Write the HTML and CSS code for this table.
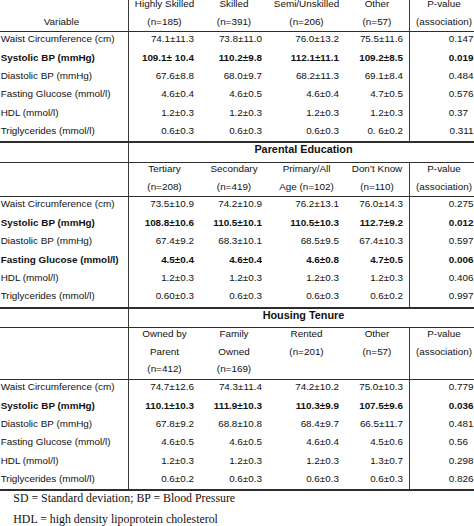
FILE: index.html
```html
<!DOCTYPE html>
<html>
<head>
<meta charset="utf-8">
<link rel="stylesheet" href="styles.css">
</head>
<body>
<div class="sheet">
<table class="tbl">
<colgroup><col class="c1"><col class="c2"><col class="c3"><col class="c4"><col class="c5"><col class="c6"></colgroup>
<tbody>
<tr class="hd">
<th class="var"><div class="ln">&nbsp;</div><div class="ln">Variable</div></th>
<th><div class="ln">Highly Skilled</div><div class="ln">(n=185)</div></th>
<th><div class="ln">Skilled</div><div class="ln">(n=391)</div></th>
<th><div class="ln">Semi/Unskilled</div><div class="ln">(n=206)</div></th>
<th class="sep"><div class="ln">Other</div><div class="ln">(n=57)</div></th>
<th class="pv"><div class="ln">P-value</div><div class="ln">(association)</div></th>
</tr>
<tr><td class="var">Waist Circumference (cm)</td><td>74.1±11.3</td><td>73.8±11.0</td><td>76.0±13.2</td><td class="sep">75.5±11.6</td><td class="pv">0.147</td></tr>
<tr class="b"><td class="var">Systolic BP (mmHg)</td><td>109.1± 10.4</td><td>110.2±9.8</td><td>112.1±11.1</td><td class="sep">109.2±8.5</td><td class="pv">0.019</td></tr>
<tr><td class="var">Diastolic BP (mmHg)</td><td>67.6±8.8</td><td>68.0±9.7</td><td>68.2±11.3</td><td class="sep">69.1±8.4</td><td class="pv">0.484</td></tr>
<tr><td class="var">Fasting Glucose (mmol/l)</td><td>4.6±0.4</td><td>4.6±0.5</td><td>4.6±0.4</td><td class="sep">4.7±0.5</td><td class="pv">0.576</td></tr>
<tr><td class="var">HDL (mmol/l)</td><td>1.2±0.3</td><td>1.2±0.3</td><td>1.2±0.3</td><td class="sep">1.2±0.3</td><td class="pv"><span class="short">0.37</span></td></tr>
<tr class="last"><td class="var">Triglycerides (mmol/l)</td><td>0.6±0.3</td><td>0.6±0.3</td><td>0.6±0.3</td><td class="sep">0. 6±0.2</td><td class="pv">0.311</td></tr>

<tr class="sec"><td class="var"></td><td colspan="5" class="title">Parental Education</td></tr>
<tr class="hd">
<th class="var"><div class="ln">&nbsp;</div><div class="ln">&nbsp;</div></th>
<th><div class="ln">Tertiary</div><div class="ln">(n=208)</div></th>
<th><div class="ln">Secondary</div><div class="ln">(n=419)</div></th>
<th><div class="ln">Primary/All</div><div class="ln">Age (n=102)</div></th>
<th class="sep"><div class="ln">Don’t Know</div><div class="ln">(n=110)</div></th>
<th class="pv"><div class="ln">P-value</div><div class="ln">(association)</div></th>
</tr>
<tr><td class="var">Waist Circumference (cm)</td><td>73.5±10.9</td><td>74.2±10.9</td><td>76.2±13.1</td><td class="sep">76.0±14.3</td><td class="pv">0.275</td></tr>
<tr class="b"><td class="var">Systolic BP (mmHg)</td><td>108.8±10.6</td><td>110.5±10.1</td><td>110.5±10.3</td><td class="sep">112.7±9.2</td><td class="pv">0.012</td></tr>
<tr><td class="var">Diastolic BP (mmHg)</td><td>67.4±9.2</td><td>68.3±10.1</td><td>68.5±9.5</td><td class="sep">67.4±10.3</td><td class="pv">0.597</td></tr>
<tr class="b"><td class="var">Fasting Glucose (mmol/l)</td><td>4.5±0.4</td><td>4.6±0.4</td><td>4.6±0.8</td><td class="sep">4.7±0.5</td><td class="pv">0.006</td></tr>
<tr><td class="var">HDL (mmol/l)</td><td>1.2±0.3</td><td>1.2±0.3</td><td>1.2±0.3</td><td class="sep">1.2±0.3</td><td class="pv">0.406</td></tr>
<tr class="last"><td class="var">Triglycerides (mmol/l)</td><td>0.60±0.3</td><td>0.6±0.3</td><td>0.6±0.3</td><td class="sep">0.6±0.2</td><td class="pv">0.997</td></tr>

<tr class="sec"><td class="var"></td><td colspan="5" class="title">Housing Tenure</td></tr>
<tr class="hd">
<th class="var"><div class="ln">&nbsp;</div><div class="ln">&nbsp;</div><div class="ln">&nbsp;</div></th>
<th><div class="ln">Owned by</div><div class="ln">Parent</div><div class="ln">(n=412)</div></th>
<th><div class="ln">Family</div><div class="ln">Owned</div><div class="ln">(n=169)</div></th>
<th><div class="ln">Rented</div><div class="ln">(n=201)</div></th>
<th class="sep"><div class="ln">Other</div><div class="ln">(n=57)</div></th>
<th class="pv"><div class="ln">P-value</div><div class="ln">(association)</div></th>
</tr>
<tr><td class="var">Waist Circumference (cm)</td><td>74.7±12.6</td><td>74.3±11.4</td><td>74.2±10.2</td><td class="sep">75.0±10.3</td><td class="pv">0.779</td></tr>
<tr class="b"><td class="var">Systolic BP (mmHg)</td><td>110.1±10.3</td><td>111.9±10.3</td><td>110.3±9.9</td><td class="sep">107.5±9.6</td><td class="pv">0.036</td></tr>
<tr><td class="var">Diastolic BP (mmHg)</td><td>67.8±9.2</td><td>68.8±10.8</td><td>68.4±9.7</td><td class="sep">66.5±11.7</td><td class="pv">0.481</td></tr>
<tr><td class="var">Fasting Glucose (mmol/l)</td><td>4.6±0.5</td><td>4.6±0.5</td><td>4.6±0.4</td><td class="sep">4.5±0.6</td><td class="pv"><span class="short">0.56</span></td></tr>
<tr><td class="var">HDL (mmol/l)</td><td>1.2±0.3</td><td>1.2±0.3</td><td>1.2±0.3</td><td class="sep">1.3±0.7</td><td class="pv">0.298</td></tr>
<tr class="last"><td class="var">Triglycerides (mmol/l)</td><td>0.6±0.2</td><td>0.6±0.3</td><td>0.6±0.3</td><td class="sep">0.6±0.3</td><td class="pv">0.826</td></tr>
</tbody>
</table>
</div>
<div class="notes">
<p class="note">SD = Standard deviation; BP = Blood Pressure</p>
<p class="note second">HDL = high density lipoprotein cholesterol</p>
</div>
</body>
</html>
```
FILE: styles.css
```css
html, body {
  margin: 0;
  padding: 0;
  background: #ffffff;
}
body {
  width: 474px;
  height: 526px;
  overflow: hidden;
  color: #111111;
}
.sheet {
  margin-left: -5px;
  margin-top: -2.2px;
  width: 483px;
}
.tbl {
  width: 483px;
  table-layout: fixed;
  border-collapse: separate;
  border-spacing: 0;
  font-family: "Liberation Sans", Arial, sans-serif;
  font-size: 9.9px;
  color: #111111;
}
.c1 { width: 134px; }
.c2 { width: 71px; }
.c3 { width: 68px; }
.c4 { width: 77px; }
.c5 { width: 65px; }
.c6 { width: 68px; }

.tbl th, .tbl td {
  box-sizing: border-box;
  white-space: nowrap;
  overflow: visible;
}
.tbl th {
  font-weight: normal;
  text-align: center;
  vertical-align: top;
  padding: 0 0 3.8px 0;
  border-bottom: 1px solid #2e2e2e;
}
.tbl th .ln {
  line-height: 12px;
}
.tbl th .ln + .ln {
  margin-top: 5.7px;
}
.tbl td {
  text-align: right;
  vertical-align: top;
  line-height: 14.5px;
  padding: 0 6px 3.9px 0;
}
.tbl .var {
  text-align: left;
  padding-left: 5.7px;
  border-right: 1px solid #3a3a3a;
}
.tbl th.var {
  text-align: center;
  padding-left: 0;
}
.tbl .sep {
  border-right: 1px solid #3a3a3a;
}
.tbl td.pv {
  padding-right: 4.5px;
}
.short {
  padding-right: 5.5px;
}
.tbl tr.b td {
  font-weight: bold;
}
.tbl tr.last td {
  padding-bottom: 2.7px;
  border-bottom: 2px solid #2e2e2e;
}
.tbl tr.sec td {
  line-height: 12.3px;
  padding: 0 0 6.2px 0;
  border-bottom: 1px solid #2e2e2e;
}
.tbl tr.sec td.title {
  text-align: center;
  font-weight: bold;
  font-size: 10.85px;
}
.notes {
  padding-left: 13.3px;
  font-family: "Liberation Serif", "Times New Roman", serif;
  font-size: 11.85px;
  color: #111111;
}
.note {
  margin: 0;
  line-height: 14px;
}
.note.second {
  margin-top: 6.5px;
}
```
